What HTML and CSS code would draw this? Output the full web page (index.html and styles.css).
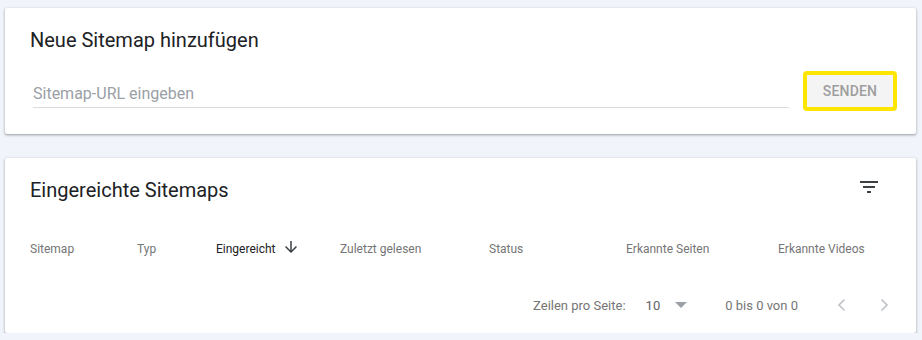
FILE: index.html
```html
<!DOCTYPE html>
<html lang="de">
<head>
<meta charset="utf-8">
<link rel="stylesheet" href="styles.css">
</head>
<body>
<div class="page">
  <section class="card card-add">
    <h2 class="card-title">Neue Sitemap hinzufügen</h2>
    <div class="add-row">
      <div class="url-field"><span class="placeholder">Sitemap-URL eingeben</span></div>
      <button class="send-btn"><span>SENDEN</span></button>
    </div>
  </section>

  <section class="card card-list">
    <div class="list-head">
      <h2 class="card-title">Eingereichte Sitemaps</h2>
      <svg class="filter-icon" width="24" height="24" viewBox="0 0 24 24"><path d="M10 18h4v-2h-4v2zM3 6v2h18V6H3zm3 7h12v-2H6v2z" fill="#3c4043"/></svg>
    </div>
    <div class="table-head">
      <div class="col c1">Sitemap</div>
      <div class="col c2">Typ</div>
      <div class="col c3 sorted">Eingereicht
        <svg class="sort-icon" width="18" height="18" viewBox="0 0 24 24"><path d="M20 12l-1.41-1.41L13 16.17V4h-2v12.17l-5.58-5.59L4 12l8 8 8-8z" fill="#3c4043"/></svg>
      </div>
      <div class="col c4">Zuletzt gelesen</div>
      <div class="col c5">Status</div>
      <div class="col c6">Erkannte Seiten</div>
      <div class="col c7">Erkannte Videos</div>
    </div>
    <div class="pager">
      <span class="rows-label">Zeilen pro Seite:</span>
      <span class="rows-value">10</span>
      <svg class="dd-icon" width="12" height="6" viewBox="0 0 12 6"><path d="M0 0h12L6 6z" fill="#9aa0a6"/></svg>
      <span class="range">0 bis 0 von 0</span>
      <svg class="chev chev-prev" width="24" height="24" viewBox="0 0 24 24"><path d="M15.5 6.5L10 12l5.5 5.5" fill="none" stroke="#bdc1c6" stroke-width="1.6"/></svg>
      <svg class="chev chev-next" width="24" height="24" viewBox="0 0 24 24"><path d="M8.5 6.5L14 12l-5.5 5.5" fill="none" stroke="#bdc1c6" stroke-width="1.6"/></svg>
    </div>
  </section>
</div>
</body>
</html>
```

FILE: styles.css
```css
html, body {
  margin: 0;
  padding: 0;
  background: #f1f4fb;
}
body {
  font-family: Roboto, "Liberation Sans", Arial, sans-serif;
  color: #202124;
}
.page {
  padding: 8px 6px 0 5px;
  display: flex;
  flex-direction: column;
  gap: 24px;
}
.card {
  background: #fff;
  border-radius: 2px;
  box-shadow: 0 1px 2px 0 rgba(60,64,67,.35), 0 1px 3px 1px rgba(60,64,67,.12);
}
.card-title {
  margin: 0;
  font-size: 20px;
  line-height: 28px;
  font-weight: 400;
  color: #202124;
}
.card-add {
  padding: 18px 19px 23px 25px;
  height: 85px;
}
.add-row {
  margin-top: 17px;
  display: flex;
  align-items: flex-start;
  gap: 14px;
}
.url-field {
  flex: 1;
  margin-left: 3px;
  padding-top: 13px;
  box-sizing: border-box;
  height: 37px;
  border-bottom: 1px solid #dadce0;
}
.placeholder {
  display: block;
  font-size: 16px;
  line-height: 20px;
  color: #9aa0a6;
}
.send-btn {
  width: 94px;
  height: 40px;
  box-sizing: border-box;
  border: 4px solid #ffe600;
  border-radius: 4px;
  background: #f4f4f4;
  font-family: inherit;
  font-size: 14px;
  font-weight: 500;
  letter-spacing: 0.2px;
  color: #9e9e9e;
  padding: 0;
}
.card-list {
  height: 175px;
  display: flex;
  flex-direction: column;
}
.list-head {
  display: flex;
  justify-content: space-between;
  padding: 18px 35px 0 25px;
}
.filter-icon {
  margin-top: -1px;
}
.table-head {
  margin-top: 17px;
  height: 56px;
  display: flex;
  align-items: center;
  padding-left: 25px;
  font-size: 12px;
  color: #757575;
}
.col { flex: none; display: flex; align-items: center; }
.c1 { width: 107px; }
.c2 { width: 79px; }
.c3 { width: 124px; }
.c4 { width: 149px; }
.c5 { width: 137px; }
.c6 { width: 152px; }
.c7 { width: 100px; }
.sorted { color: #202124; }
.sort-icon { margin-left: 6px; margin-top: -4px; }
.pager {
  height: 56px;
  display: flex;
  align-items: center;
  justify-content: flex-end;
  padding-right: 19px;
  font-size: 13px;
  color: #757575;
}
.rows-value {
  margin-left: 20px;
  color: #5f6368;
}
.dd-icon { margin-left: 15px; }
.range { margin-left: 38px; }
.chev-prev { margin-left: 31px; }
.chev-next { margin-left: 20px; }
```
